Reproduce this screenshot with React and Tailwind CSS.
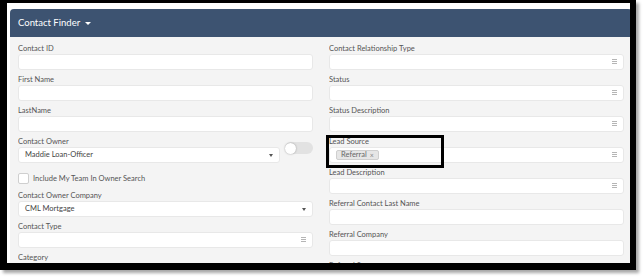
import React from "react";

const font = { fontFamily: "Lato, 'Open Sans', sans-serif" };

function Lines() {
  return (
    <svg width="5" height="6" viewBox="0 0 5 6" className="shrink-0">
      <rect x="0" y="0" width="5" height="1" fill="#b5b5b5" />
      <rect x="0" y="2" width="5" height="1" fill="#b5b5b5" />
      <rect x="0" y="4" width="5" height="1" fill="#b5b5b5" />
    </svg>
  );
}

function Caret() {
  return (
    <span className="block w-0 h-0 border-l-[2.5px] border-r-[2.5px] border-t-[3px] border-l-transparent border-r-transparent border-t-[#555]" />
  );
}

function Field({ label, value, icon, chip, className = "" }) {
  return (
    <div className={"mb-[3px] " + className}>
      <div className="h-[12px] leading-[13px] text-[7.5px] text-[#555] truncate">{label}</div>
      <div className="h-[16px] bg-white border border-[#e8e8e8] rounded-[3px] flex items-center pl-[6px] pr-[6px]">
        <div className="flex-1 flex items-center text-[7.5px] text-[#444]">
          {chip && (
            <span className="flex items-center h-[10px] px-[4px] bg-[#e6e6e6] border border-[#cfcfcf] rounded-[2px] text-[7.5px] text-[#666] gap-[3px]">
              {chip}
              <span className="text-[7px] text-[#888]">×</span>
            </span>
          )}
          {value}
        </div>
        {icon === "lines" && <Lines />}
        {icon === "caret" && <Caret />}
      </div>
    </div>
  );
}

export default function App() {
  return (
    <div className="w-[644px] h-[277px] bg-white relative overflow-hidden" style={font}>
      <div className="w-[636px] h-[270px] border-black border-l-[7px] border-t-[3px] border-r-[6px] border-b-[7px] shadow-[3px_3px_3px_rgba(0,0,0,0.35)] bg-white pl-[3px] pt-[6px] overflow-hidden">
        <div className="w-[622px] h-[260px] bg-[#f4f4f4] rounded-t-[4px] overflow-hidden">
          <div className="h-[28px] bg-[#3d5371] flex items-center pl-[8px] gap-[5px] pt-[1px]">
            <span className="text-[9.5px] text-white">Contact Finder</span>
            <span className="block w-0 h-0 border-l-[3px] border-r-[3px] border-t-[3.5px] border-l-transparent border-r-transparent border-t-white" />
          </div>
          <div className="flex gap-[16px] px-[8px] pt-[5px]">
            <div className="w-[295px] shrink-0">
              <Field label="Contact ID" />
              <Field label="First Name" />
              <Field label="LastName" />
              <div className="flex gap-[5px]">
                <Field label="Contact Owner" value="Maddie Loan-Officer" icon="caret" className="flex-1" />
                <div className="mt-[7px] w-[28px] h-[12px] rounded-full bg-[#e2e2e2] relative">
                  <div className="absolute left-0 top-[0.5px] w-[11px] h-[11px] rounded-full bg-white shadow-[0_0_2px_rgba(0,0,0,0.35)]" />
                </div>
              </div>
              <div className="flex items-center gap-[4px] mt-[7px] mb-[5px] h-[11px]">
                <div className="w-[11px] h-[11px] bg-white border border-[#cfcfcf] rounded-[2px]" />
                <span className="text-[7.5px] text-[#555]">Include My Team In Owner Search</span>
              </div>
              <Field label="Contact Owner Company" value="CML Mortgage" icon="caret" />
              <Field label="Contact Type" icon="lines" />
              <Field label="Category" />
            </div>
            <div className="w-[295px] shrink-0">
              <Field label="Contact Relationship Type" icon="lines" />
              <Field label="Status" icon="lines" />
              <Field label="Status Description" icon="lines" />
              <Field label="Lead Source" icon="lines" chip="Referral" />
              <Field label="Lead Description" icon="lines" />
              <Field label="Referral Contact Last Name" />
              <Field label="Referral Company" />
              <Field label="Referral Source" />
            </div>
          </div>
        </div>
      </div>
      <div className="absolute left-[326px] top-[135px] w-[118px] h-[33px] border-[3px] border-black" />
    </div>
  );
}
